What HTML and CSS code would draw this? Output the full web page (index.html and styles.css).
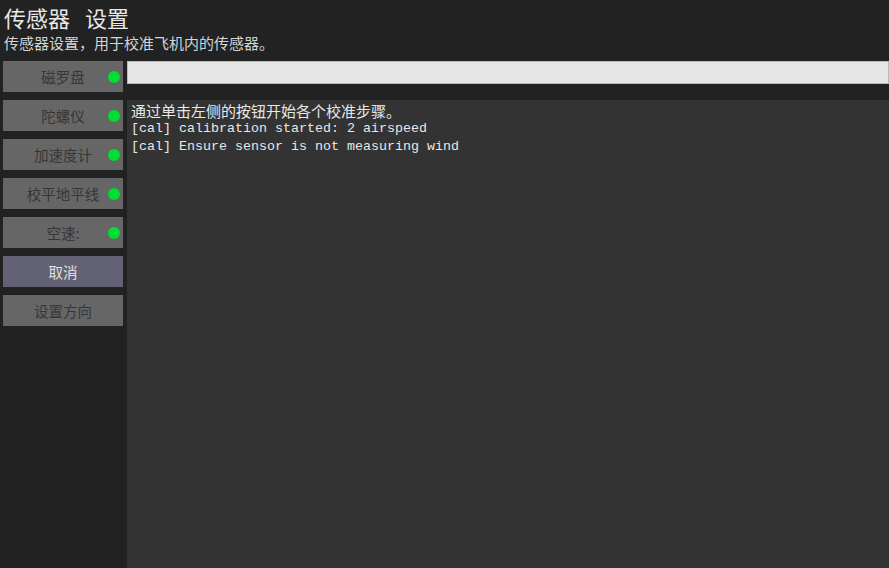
FILE: index.html
```html
<!DOCTYPE html>
<html lang="zh-CN">
<head>
  <meta charset="UTF-8">
  <title>传感器 设置</title>
  <link rel="stylesheet" href="styles.css">
</head>
<body>

  <div class="header">
    <h1 class="title">传感器<span class="gap"></span>设置</h1>
    <p class="subtitle">传感器设置，用于校准飞机内的传感器。</p>
  </div>

  <div class="main">
    <div class="sidebar">
      <button class="btn">磁罗盘<span class="dot"></span></button>
      <button class="btn">陀螺仪<span class="dot"></span></button>
      <button class="btn">加速度计<span class="dot"></span></button>
      <button class="btn">校平地平线<span class="dot"></span></button>
      <button class="btn">空速:<span class="dot"></span></button>
      <button class="btn btn-cancel">取消</button>
      <button class="btn">设置方向</button>
    </div>

    <div class="content">
      <div class="progress"></div>
      <div class="log">
        <div class="log-line log-cn">通过单击左侧的按钮开始各个校准步骤。</div>
        <div class="log-line">[cal] calibration started: 2 airspeed</div>
        <div class="log-line">[cal] Ensure sensor is not measuring wind</div>
      </div>
    </div>
  </div>

</body>
</html>
```

FILE: styles.css
```css
html, body {
  height: 100%;
}

body {
  margin: 0;
  background-color: #222222;
  font-family: "Noto Sans CJK SC", "Noto Sans", sans-serif;
  display: flex;
  flex-direction: column;
  overflow: hidden;
}

.header {
  height: 61px;
  padding: 0 4px;
  box-sizing: border-box;
}

.title {
  margin: 0;
  padding-top: 3px;
  font-size: 22px;
  font-weight: normal;
  line-height: 28px;
  color: #e8e8e8;
}

.title .gap {
  display: inline-block;
  width: 15px;
}

.subtitle {
  margin: 0;
  padding-top: 2px;
  font-size: 15px;
  line-height: 20px;
  color: #d4d4d4;
}

.main {
  flex: 1;
  display: flex;
  min-height: 0;
}

.sidebar {
  width: 120px;
  padding: 0 4px 0 3px;
  display: flex;
  flex-direction: column;
  gap: 8px;
}

.btn {
  position: relative;
  height: 31px;
  border: none;
  margin: 0;
  padding: 0;
  background-color: #666666;
  color: #363636;
  font-family: "Noto Sans CJK SC", sans-serif;
  font-size: 14.5px;
  text-align: center;
}

.btn-cancel {
  background-color: #626274;
  color: #e0e0e0;
}

.dot {
  position: absolute;
  right: 3px;
  top: 10px;
  width: 12px;
  height: 12px;
  border-radius: 50%;
  background-color: #00dd33;
}

.content {
  flex: 1;
  display: flex;
  flex-direction: column;
}

.progress {
  height: 23px;
  background-color: #e5e5e5;
  border: 1px solid #b8b8b8;
  box-sizing: border-box;
  margin-bottom: 16px;
}

.log {
  flex: 1;
  background-color: #333333;
  padding: 2px 4px;
  color: #e8e8e8;
  font-family: "Liberation Mono", "Noto Sans CJK SC", monospace;
  font-size: 13.33px;
}

.log-line {
  line-height: 17.5px;
  white-space: pre;
}

.log-line + .log-line {
  padding-top: 0.5px;
}

.log-cn {
  font-family: "Noto Sans CJK SC", sans-serif;
  font-size: 15px;
}
```
